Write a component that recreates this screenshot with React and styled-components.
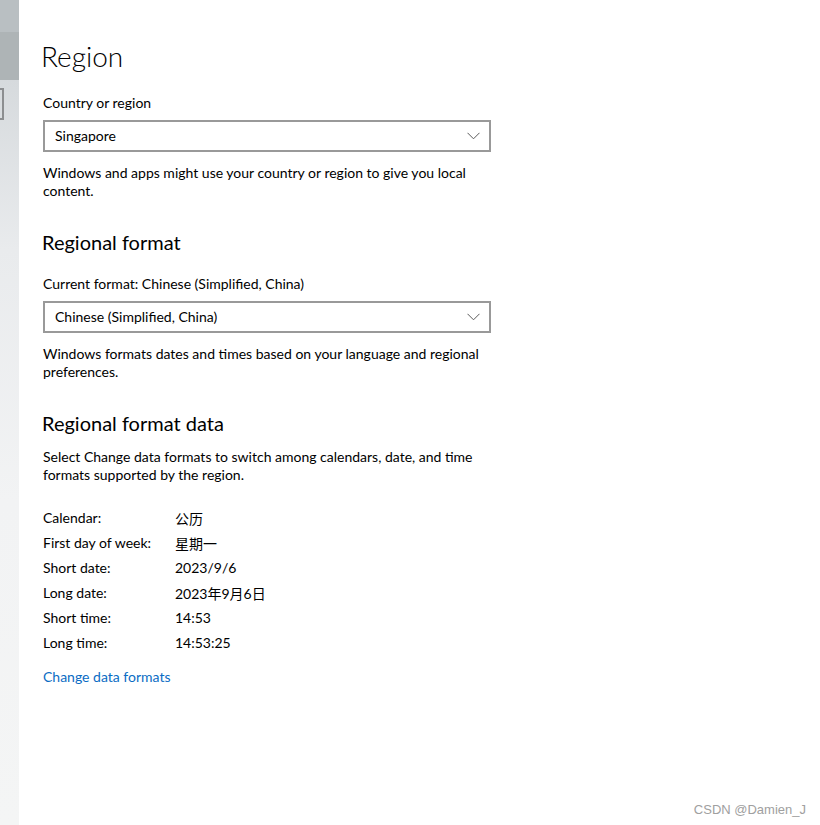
import React from 'react';
import styled, { createGlobalStyle } from 'styled-components';

const GlobalStyle = createGlobalStyle`
  html, body {
    margin: 0;
    padding: 0;
    background: #ffffff;
  }
  body {
    font-family: 'Segoe UI', 'Lato', 'Noto Sans CJK SC', sans-serif;
    color: #000000;
  }
`;

const formatData = [
  { label: 'Calendar:', value: '公历' },
  { label: 'First day of week:', value: '星期一' },
  { label: 'Short date:', value: '2023/9/6' },
  { label: 'Long date:', value: '2023年9月6日' },
  { label: 'Short time:', value: '14:53' },
  { label: 'Long time:', value: '14:53:25' },
];

const ChevronDown = () => (
  <svg width="13" height="8" viewBox="0 0 13 8" fill="none">
    <path d="M0.5 0.8 L6.5 6.8 L12.5 0.8" stroke="#5a5a5a" strokeWidth="1" />
  </svg>
);

const Dropdown = ({ value }) => (
  <Select>
    <span>{value}</span>
    <ChevronDown />
  </Select>
);

const App = () => {
  return (
    <>
      <GlobalStyle />
      <Page>
        <Sidebar>
          <div className="top" />
          <div className="selected" />
          <div className="search" />
        </Sidebar>
        <Main>
          <Title>Region</Title>

          <Label>Country or region</Label>
          <Dropdown value="Singapore" />
          <Description>
            Windows and apps might use your country or region to give you local content.
          </Description>

          <Heading>Regional format</Heading>
          <Label $top={18}>Current format: Chinese (Simplified, China)</Label>
          <Dropdown value="Chinese (Simplified, China)" />
          <Description>
            Windows formats dates and times based on your language and regional preferences.
          </Description>

          <Heading>Regional format data</Heading>
          <Description $top={11}>
            Select Change data formats to switch among calendars, date, and time formats
            supported by the region.
          </Description>

          <DataTable>
            {formatData.map((row) => (
              <DataRow key={row.label}>
                <span className="label">{row.label}</span>
                <span className="value">{row.value}</span>
              </DataRow>
            ))}
          </DataTable>

          <Link href="#">Change data formats</Link>
        </Main>
        <Watermark>CSDN @Damien_J</Watermark>
      </Page>
    </>
  );
};

export default App;

const Page = styled.div`
  position: relative;
  display: flex;
  width: 820px;
  height: 825px;
  overflow: hidden;
  background: #ffffff;
`;

const Sidebar = styled.div`
  width: 19px;
  flex-shrink: 0;
  display: flex;
  flex-direction: column;
  background: linear-gradient(180deg, #d6dadd 80px, #e9ebed 250px, #f2f3f4 500px, #f4f5f5 100%);

  .top {
    height: 32px;
    background: #b9bfc2;
  }
  .selected {
    height: 48px;
    background: #aeb4b6;
  }
  .search {
    margin-top: 8px;
    width: 2px;
    height: 28px;
    border: 2px solid #8c8e90;
    border-left: none;
  }
`;

const Main = styled.div`
  flex: 1;
  padding: 36px 0 0 24px;
  display: flex;
  flex-direction: column;
  align-items: flex-start;
`;

const Title = styled.h1`
  margin: 0 0 0 -2px;
  font-size: 28px;
  font-weight: 300;
  line-height: 40px;
`;

const Heading = styled.h2`
  margin: 28px 0 0 -1px;
  font-size: 20px;
  font-weight: 400;
  line-height: 28px;
`;

const Label = styled.div`
  margin-top: ${(p) => p.$top ?? 17}px;
  font-size: 14px;
  line-height: 20px;
`;

const Select = styled.div`
  margin-top: 7px;
  box-sizing: border-box;
  width: 448px;
  height: 32px;
  border: 2px solid #999999;
  display: flex;
  align-items: center;
  justify-content: space-between;
  padding: 0 9px 0 10px;
  font-size: 14px;

  span {
    line-height: 20px;
  }
`;

const Description = styled.p`
  margin: ${(p) => p.$top ?? 12}px 0 0 0;
  width: 450px;
  font-size: 14px;
  line-height: 18px;
`;

const DataTable = styled.div`
  margin-top: 21px;
  display: flex;
  flex-direction: column;
`;

const DataRow = styled.div`
  display: grid;
  grid-template-columns: 132px auto;
  height: 25px;
  align-items: center;
  font-size: 14px;
`;

const Link = styled.a`
  margin-top: 12px;
  font-size: 14px;
  line-height: 20px;
  color: #0a6cc4;
  text-decoration: none;
`;

const Watermark = styled.div`
  position: absolute;
  right: 14px;
  bottom: 8px;
  font-family: 'Liberation Sans', Arial, sans-serif;
  font-size: 13px;
  color: #a0a0a0;
`;
